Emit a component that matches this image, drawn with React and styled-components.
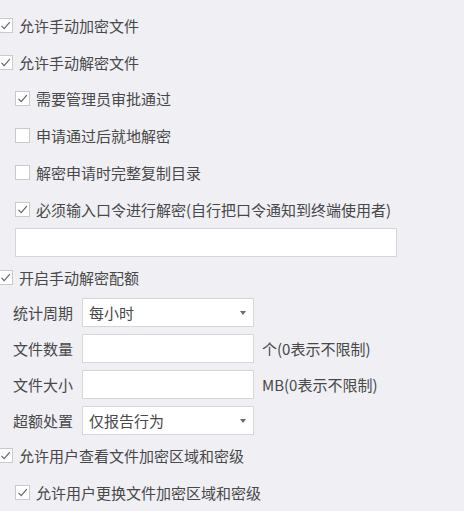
import React from "react";
import styled, { createGlobalStyle } from "styled-components";

const Global = createGlobalStyle`
  html, body { margin: 0; padding: 0; background: #efeff4; }
  body { font-family: "Noto Sans CJK SC", "Noto Sans", sans-serif; }
`;

const Page = styled.div`
  display: flex;
  flex-direction: column;
  padding-top: 7px;
  width: 464px;
  height: 511px;
  box-sizing: border-box;
  overflow: hidden;
  color: #484848;
  font-size: 15px;
`;

const CheckRow = styled.label`
  display: flex;
  align-items: center;
  gap: 6px;
  height: 37px;
  margin-left: ${(p) => (p.$nested ? "15px" : "-2px")};
  margin-top: ${(p) => p.$mt || 0}px;
  white-space: nowrap;
`;

const Box = styled.span`
  display: inline-flex;
  align-items: center;
  justify-content: center;
  width: 15px;
  height: 15px;
  box-sizing: border-box;
  border: 1px solid #cacace;
  background: #fff;
  flex: none;
`;

const TextField = styled.div`
  width: ${(p) => p.$w}px;
  height: ${(p) => p.$h}px;
  box-sizing: border-box;
  border: 1px solid #d6d6da;
  background: #fff;
  margin-left: ${(p) => p.$ml || 0}px;
  flex: none;
`;

const FieldGrid = styled.div`
  display: flex;
  flex-direction: column;
  gap: 7px;
  margin-top: 3px;
  padding-left: 13px;
`;

const FieldRow = styled.div`
  display: flex;
  align-items: center;
  height: 29px;
`;

const Label = styled.span`
  width: 69px;
  flex: none;
`;

const Select = styled.div`
  width: 172px;
  height: 29px;
  box-sizing: border-box;
  border: 1px solid #d6d6da;
  background: #fff;
  display: flex;
  align-items: center;
  justify-content: space-between;
  padding: 0 7px 0 6px;
  flex: none;
`;

const Arrow = styled.span`
  width: 0;
  height: 0;
  border-left: 3.5px solid transparent;
  border-right: 3.5px solid transparent;
  border-top: 4px solid #6a6a6a;
`;

const Suffix = styled.span`
  margin-left: 8px;
  white-space: nowrap;
`;

const Check = ({ on }) => (
  <Box>
    {on && (
      <svg width="13" height="13" viewBox="0 0 13 13">
        <path d="M2.5 6.8 L5.2 9.6 L10.8 3.2" fill="none" stroke="#666" strokeWidth="1.2" />
      </svg>
    )}
  </Box>
);

const Item = ({ on, nested, mt, children }) => (
  <CheckRow $nested={nested} $mt={mt}>
    <Check on={on} />
    <span>{children}</span>
  </CheckRow>
);

export default function App() {
  return (
    <>
      <Global />
      <Page>
        <Item on>允许手动加密文件</Item>
        <Item on>允许手动解密文件</Item>
        <Item on nested>需要管理员审批通过</Item>
        <Item nested>申请通过后就地解密</Item>
        <Item nested>解密申请时完整复制目录</Item>
        <Item on nested>必须输入口令进行解密(自行把口令通知到终端使用者)</Item>
        <TextField $w={382} $h={29} $ml={15} />
        <Item on mt={2}>开启手动解密配额</Item>
        <FieldGrid>
          <FieldRow>
            <Label>统计周期</Label>
            <Select>
              <span>每小时</span>
              <Arrow />
            </Select>
          </FieldRow>
          <FieldRow>
            <Label>文件数量</Label>
            <TextField $w={172} $h={29} />
            <Suffix>个(0表示不限制)</Suffix>
          </FieldRow>
          <FieldRow>
            <Label>文件大小</Label>
            <TextField $w={172} $h={29} />
            <Suffix>MB(0表示不限制)</Suffix>
          </FieldRow>
          <FieldRow>
            <Label>超额处置</Label>
            <Select>
              <span>仅报告行为</span>
              <Arrow />
            </Select>
          </FieldRow>
        </FieldGrid>
        <Item on mt={2}>允许用户查看文件加密区域和密级</Item>
        <Item on nested>允许用户更换文件加密区域和密级</Item>
      </Page>
    </>
  );
}
